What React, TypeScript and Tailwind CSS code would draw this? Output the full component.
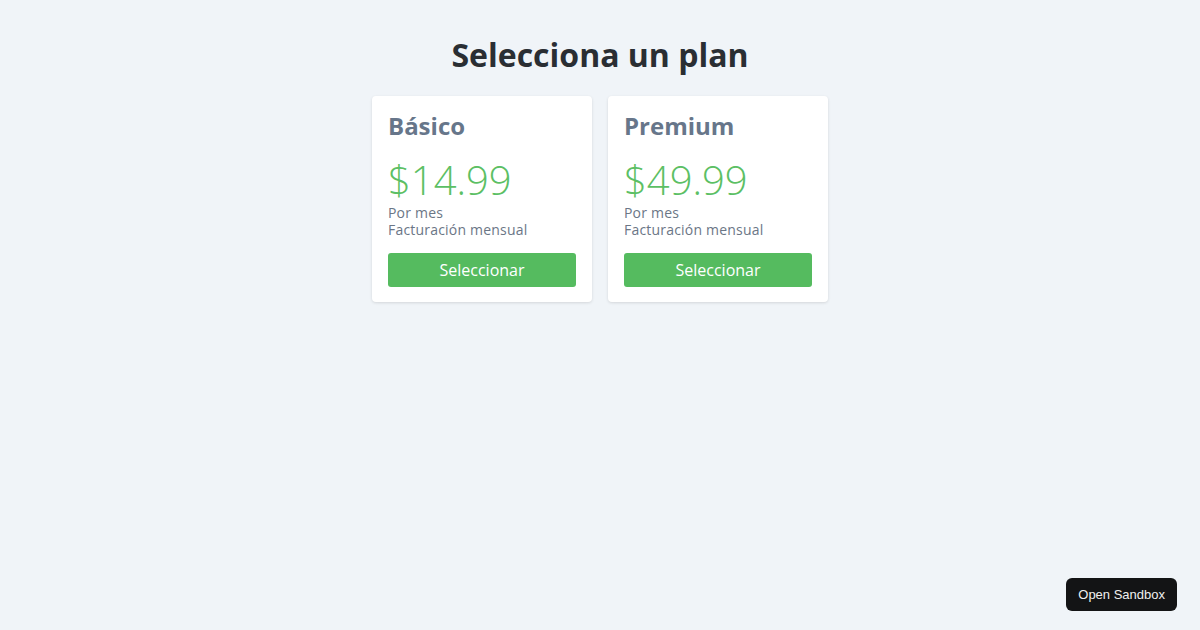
const plans = [
  { name: 'Básico', price: '$14.99' },
  { name: 'Premium', price: '$49.99' },
];

export default function App() {
  return (
    <div
      className="min-h-screen w-full bg-[#f0f4f8] pt-[33px]"
      style={{ fontFamily: '"Open Sans", sans-serif' }}
    >
      <h1 className="text-center text-[32px] leading-[44px] font-bold text-[#2a2e33]">
        Selecciona un plan
      </h1>

      <div className="mt-[19px] flex justify-center gap-4">
        {plans.map((plan) => (
          <div
            key={plan.name}
            className="w-[220px] rounded bg-white px-4 pt-[15px] pb-[15px] shadow-[0_1px_3px_rgba(0,0,0,0.12)]"
          >
            <h2 className="text-[24px] leading-[30px] font-bold text-[#67768a]">
              {plan.name}
            </h2>
            <div className="mt-[15px] text-[40px] leading-[48px] font-light text-[#5cbf64]">
              {plan.price}
            </div>
            <p className="text-[14px] leading-[17px] tracking-[0.2px] text-[#6b7686]">Por mes</p>
            <p className="text-[14px] leading-[17px] tracking-[0.2px] text-[#6b7686]">
              Facturación mensual
            </p>
            <button className="mt-[15px] h-[34px] w-full rounded-[3px] bg-[#55bb5f] text-[16px] text-white">
              Seleccionar
            </button>
          </div>
        ))}
      </div>

      <button
        className="fixed right-[23px] bottom-[19px] h-[33px] rounded-md bg-[#131415] px-3 text-[13px] text-[#f0f0f0]"
        style={{ fontFamily: '"Liberation Sans", Arial, sans-serif' }}
      >
        Open Sandbox
      </button>
    </div>
  );
}
